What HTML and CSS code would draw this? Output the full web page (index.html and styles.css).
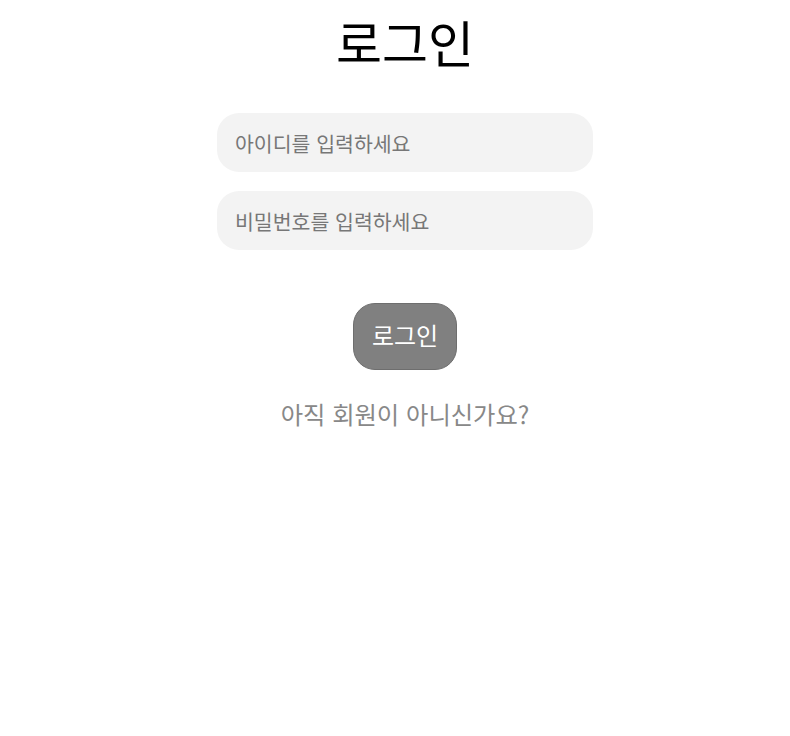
FILE: index.html
```html
<!DOCTYPE html>
<html lang="ko">
<head>
    <meta charset="UTF-8">
    <meta name="viewport" content="width=device-width, initial-scale=1.0">
    <title>로그인</title>
    <link rel="stylesheet" href="styles.css">
</head>
<body>
    <div class="login">
        <h1>로그인</h1>
        <form class="login-form">
            <input type="text" class="field" placeholder="아이디를 입력하세요">
            <input type="password" class="field" placeholder="비밀번호를 입력하세요">
            <button type="submit" class="login-btn">로그인</button>
        </form>
        <a href="#" class="signup-link">아직 회원이 아니신가요?</a>
    </div>
</body>
</html>
```

FILE: styles.css
```css
body, html {
    margin: 0;
    padding: 0;
    background: #fff;
    font-family: 'Noto Sans CJK KR', 'Noto Sans', sans-serif;
}
.login {
    display: flex;
    flex-direction: column;
    align-items: center;
    padding-left: 20px;
}
.login h1 {
    margin: 5px 0 0;
    font-size: 50px;
    font-weight: 400;
    line-height: 72px;
    color: #000;
}
.login-form {
    display: flex;
    flex-direction: column;
    align-items: center;
    gap: 19px;
    margin-top: 36px;
}
.field {
    box-sizing: border-box;
    width: 376px;
    height: 59px;
    padding: 0 18px;
    border: none;
    border-radius: 22px;
    background: #f3f3f3;
    font-family: inherit;
    font-size: 20.5px;
    color: #333;
    outline: none;
}
.field::placeholder {
    color: #777;
}
.login-btn {
    box-sizing: border-box;
    width: 104px;
    height: 67px;
    margin-top: 34px;
    padding: 0 0 4px;
    border: 1px solid #6e6e6e;
    border-radius: 22px;
    background: #808080;
    color: #fff;
    font-family: inherit;
    font-size: 24px;
    cursor: pointer;
}
.signup-link {
    margin-top: 28px;
    font-size: 24.3px;
    line-height: 32px;
    color: #888;
    text-decoration: none;
}
```
